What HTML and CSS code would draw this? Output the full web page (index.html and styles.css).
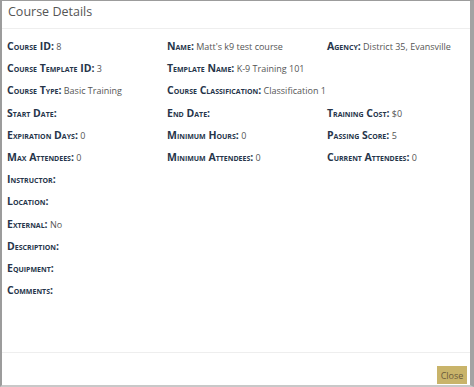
FILE: index.html
```html
<!DOCTYPE html>
<html>
<head>
<meta charset="utf-8">
<link rel="stylesheet" href="styles.css">
</head>
<body>
<div class="frame">
  <div class="modal-header">Course Details</div>
  <div class="modal-body">
    <div class="grid">
      <div class="field"><span class="lbl">Course ID:</span> 8</div>
      <div class="field"><span class="lbl">Name:</span> Matt's k9 test course</div>
      <div class="field"><span class="lbl">Agency:</span> District 35, Evansville</div>

      <div class="field"><span class="lbl">Course Template ID:</span> 3</div>
      <div class="field"><span class="lbl">Template Name:</span> K-9 Training 101</div>
      <div class="field"></div>

      <div class="field"><span class="lbl">Course Type:</span> Basic Training</div>
      <div class="field wide"><span class="lbl">Course Classification:</span> Classification 1</div>
      <div class="field"></div>

      <div class="field"><span class="lbl">Start Date:</span></div>
      <div class="field"><span class="lbl">End Date:</span></div>
      <div class="field"><span class="lbl">Training Cost:</span> $0</div>

      <div class="field"><span class="lbl">Expiration Days:</span> 0</div>
      <div class="field"><span class="lbl">Minimum Hours:</span> 0</div>
      <div class="field"><span class="lbl">Passing Score:</span> 5</div>

      <div class="field"><span class="lbl">Max Attendees:</span> 0</div>
      <div class="field"><span class="lbl">Minimum Attendees:</span> 0</div>
      <div class="field"><span class="lbl">Current Attendees:</span> 0</div>
    </div>
    <div class="list">
      <div class="field"><span class="lbl">Instructor:</span></div>
      <div class="field"><span class="lbl">Location:</span></div>
      <div class="field"><span class="lbl">External:</span> No</div>
      <div class="field"><span class="lbl">Description:</span></div>
      <div class="field"><span class="lbl">Equipment:</span></div>
      <div class="field"><span class="lbl">Comments:</span></div>
    </div>
  </div>
  <div class="modal-footer">
    <button class="btn-close">Close</button>
  </div>
</div>
</body>
</html>
```
FILE: styles.css
```css
html, body {
  margin: 0;
  padding: 0;
  background: #ffffff;
}
.frame {
  box-sizing: border-box;
  width: 474px;
  height: 387px;
  border-left: 2px solid #9c9c9c;
  border-top: 1px solid #9c9c9c;
  border-right: 4px solid #a3a3a3;
  border-bottom: 2px solid #c8c8c8;
  display: flex;
  flex-direction: column;
  font-family: "Open Sans", "Noto Sans", sans-serif;
  background: #fff;
}
.modal-header {
  height: 28px;
  box-sizing: border-box;
  padding: 1px 0 0 6px;
  font-size: 12.5px;
  line-height: 20px;
  color: #555;
  border-bottom: 1px solid #eeeeee;
}
.modal-body {
  flex: 1;
  padding: 6px 0 0 5px;
  font-size: 9px;
  color: #555;
}
.grid {
  display: grid;
  grid-template-columns: 160px 160px 150px;
}
.field {
  height: 22.2px;
  line-height: 22px;
  white-space: nowrap;
}
.lbl {
  font-weight: 700;
  font-variant: small-caps;
  font-size: 10.5px;
  color: #26354a;
}
.modal-footer {
  height: 31px;
  border-top: 1px solid #eeeeee;
  display: flex;
  justify-content: flex-end;
  align-items: flex-end;
  padding: 0 3px 1px 0;
}
.btn-close {
  width: 30px;
  height: 18px;
  padding: 0;
  border: none;
  background: #c9b46a;
  color: #6a5a3a;
  font-family: "Open Sans", "Noto Sans", sans-serif;
  font-size: 9px;
}
```
